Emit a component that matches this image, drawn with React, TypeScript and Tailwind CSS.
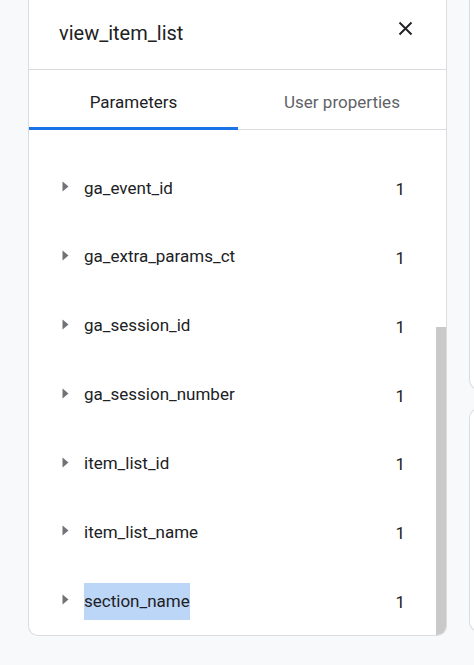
import React from 'react';

const rows = [
  'ga_event_id',
  'ga_extra_params_ct',
  'ga_session_id',
  'ga_session_number',
  'item_list_id',
  'item_list_name',
  'section_name',
];

function Caret() {
  return (
    <svg width="7" height="11" viewBox="0 0 7 11" className="shrink-0 -mt-[3px]">
      <polygon points="0.5,0.5 6.5,5.5 0.5,10.5" fill="#6f7276" />
    </svg>
  );
}

export default function App() {
  return (
    <div
      className="w-[474px] h-[665px] bg-[#f8f9fa] overflow-hidden flex items-start pl-[28px]"
      style={{ fontFamily: 'Roboto, "Noto Sans", sans-serif' }}
    >
      {/* Event detail card */}
      <div className="w-[419px] h-[636px] shrink-0 bg-white border-x border-b border-[#dadce0] rounded-b-[10px] flex flex-col overflow-hidden">
        {/* Header */}
        <div className="h-[70px] shrink-0 border-b border-[#dadce0] relative">
          <h1 className="absolute left-[30px] top-[19px] text-[20px] leading-[28px] text-[#202124]">view_item_list</h1>
          <button className="absolute left-[367px] top-[19px] w-[18px] h-[18px] flex items-center justify-center">
            <svg width="15" height="15" viewBox="0 0 15 15">
              <path d="M1.5 1.5 L13.5 13.5 M13.5 1.5 L1.5 13.5" stroke="#202124" strokeWidth="1.9" />
            </svg>
          </button>
        </div>

        {/* Tabs */}
        <div className="h-[60px] shrink-0 border-b border-[#dadce0] flex">
          <div className="w-[209px] relative flex items-center justify-center text-[17px] text-[#202124] pt-[6px]">
            Parameters
            <div className="absolute left-0 right-0 bottom-[-1px] h-[3px] bg-[#1a73e8]"></div>
          </div>
          <div className="flex-1 flex items-center justify-center text-[17px] text-[#5f6368] pt-[6px]">
            User properties
          </div>
        </div>

        {/* Parameter list */}
        <div className="flex-1 flex min-h-0">
          <div className="flex-1 pt-[24px]">
            {rows.map((name) => (
              <div key={name} className="h-[68.8px] flex items-center pl-[33px] pr-[31px] text-[17px] text-[#202124]">
                <Caret />
                {name === 'section_name' ? (
                  <span className="ml-[15px] bg-[#bcd6f7] leading-[37px]">{name}</span>
                ) : (
                  <span className="ml-[15px]">{name}</span>
                )}
                <span className="ml-auto pt-[3px]">1</span>
              </div>
            ))}
          </div>
          <div className="w-[10px] shrink-0 flex flex-col">
            <div className="mt-[197px] flex-1 bg-[#c9c9c9]"></div>
          </div>
        </div>
      </div>

      {/* Neighbouring cards */}
      <div className="ml-[22px] w-[30px] shrink-0 flex flex-col">
        <div className="h-[390px] bg-white border-l border-b border-[#dadce0] rounded-bl-[10px]"></div>
        <div className="mt-[18px] h-[224px] bg-white border-l border-y border-[#dadce0] rounded-l-[10px]"></div>
      </div>
    </div>
  );
}
